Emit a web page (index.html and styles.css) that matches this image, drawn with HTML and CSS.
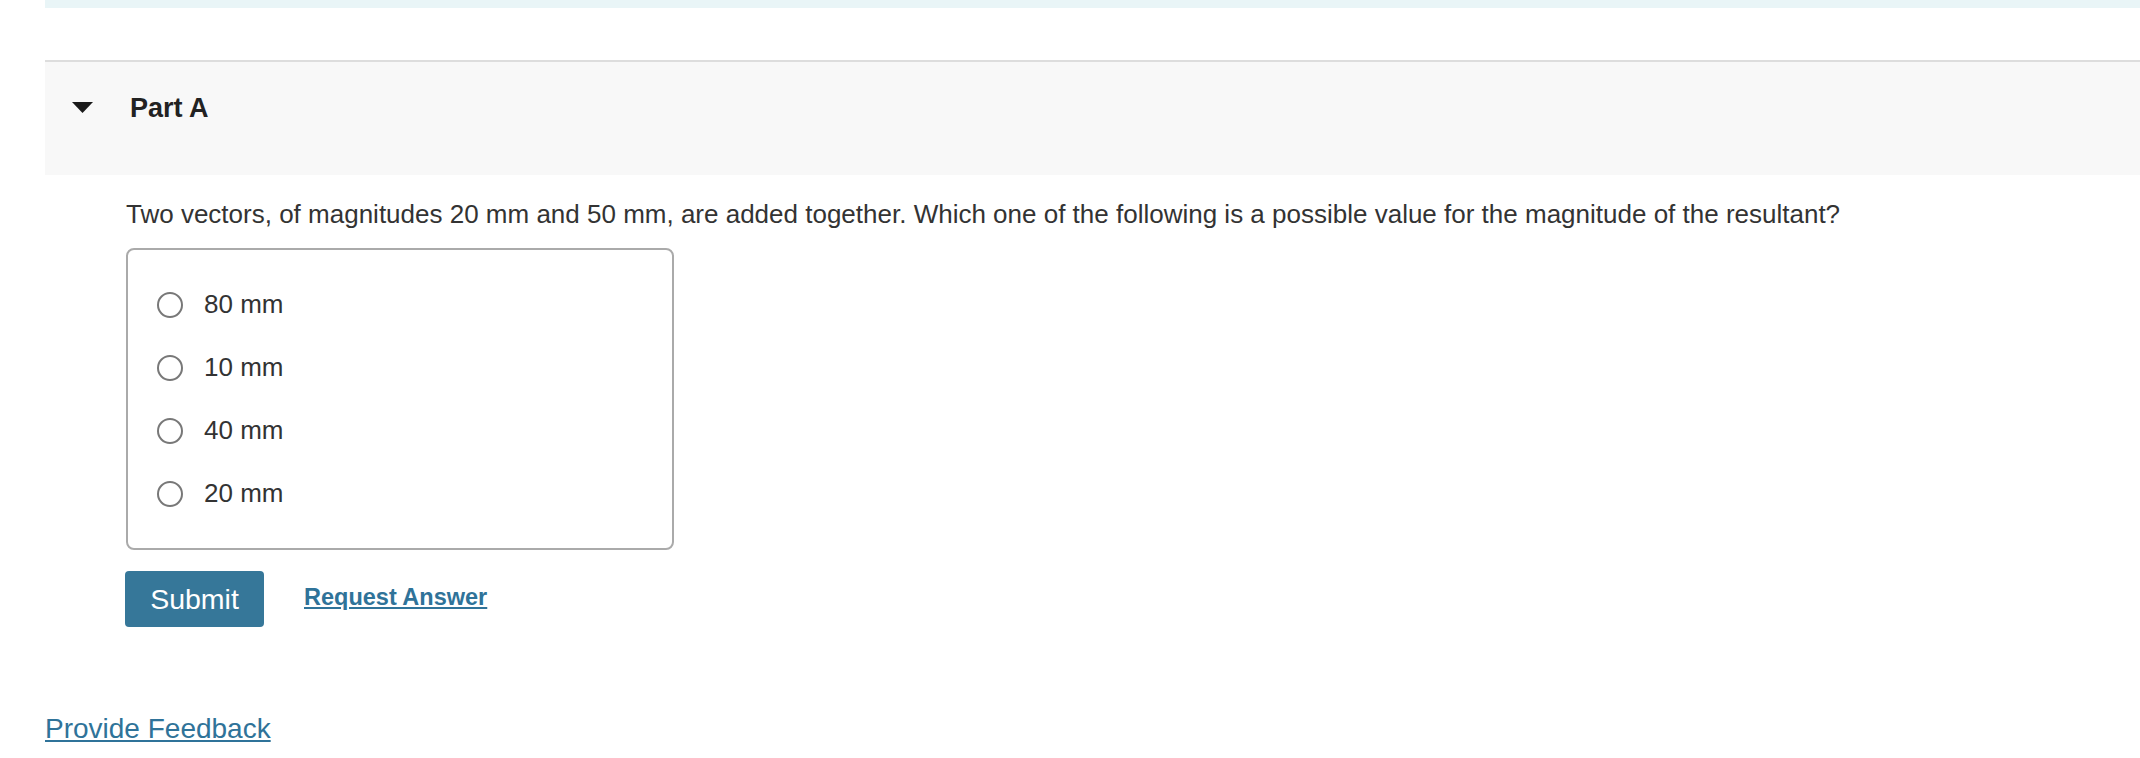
FILE: index.html
```html
<!DOCTYPE html>
<html lang="en">
<head>
<meta charset="utf-8">
<title>Part A</title>
<link rel="stylesheet" href="styles.css">
</head>
<body>
<div class="topband"></div>
<section class="part">
  <div class="part-header">
    <svg class="caret" width="21" height="11" viewBox="0 0 21 11" aria-hidden="true"><polygon points="0,0 21,0 10.5,11" fill="#1a1a1a"/></svg>
    <h2 class="part-title">Part A</h2>
  </div>
  <div class="part-body">
    <p class="question">Two vectors, of magnitudes 20 mm and 50 mm, are added together. Which one of the following is a possible value for the magnitude of the resultant?</p>
    <div class="choices">
      <label class="choice"><span class="radio"></span><span class="choice-text">80 mm</span></label>
      <label class="choice"><span class="radio"></span><span class="choice-text">10 mm</span></label>
      <label class="choice"><span class="radio"></span><span class="choice-text">40 mm</span></label>
      <label class="choice"><span class="radio"></span><span class="choice-text">20 mm</span></label>
    </div>
    <div class="actions">
      <button class="submit" type="button">Submit</button>
      <a class="request" href="#">Request Answer</a>
    </div>
  </div>
</section>
<a class="feedback" href="#">Provide Feedback</a>
</body>
</html>
```
FILE: styles.css
```css
html, body {
  margin: 0;
  padding: 0;
  background: #ffffff;
}
body {
  font-family: "Liberation Sans", Arial, Helvetica, sans-serif;
  color: #333333;
}
.topband {
  margin-left: 45px;
  height: 8px;
  background: #e9f5f7;
}
.part {
  margin-left: 45px;
  margin-top: 52px;
}
.part-header {
  border-top: 2px solid #dddddd;
  background: #f8f8f8;
  height: 83px;
  padding-top: 30px;
  padding-left: 27px;
  display: flex;
  align-items: flex-start;
  gap: 37px;
}
.caret {
  display: block;
  margin-top: 10px;
}
.part-title {
  margin: 0;
  font-size: 27px;
  font-weight: bold;
  color: #222222;
  line-height: 32px;
}
.part-body {
  padding-left: 81px;
}
.question {
  margin: 24px 0 19px 0;
  font-size: 26px;
  line-height: 30px;
  color: #333333;
}
.choices {
  width: 544px;
  border: 2px solid #aaaaaa;
  border-radius: 8px;
  padding: 23px 0 23px 0;
}
.choice {
  display: flex;
  align-items: center;
  height: 63px;
  padding-left: 29px;
  gap: 21px;
}
.radio {
  width: 22px;
  height: 22px;
  border: 2px solid #787878;
  border-radius: 50%;
  background: #ffffff;
  flex: none;
}
.choice-text {
  font-size: 26px;
  color: #333333;
}
.actions {
  margin-top: 21px;
  display: flex;
  align-items: center;
  gap: 40px;
}
.submit {
  width: 139px;
  height: 56px;
  margin-left: -1px;
  border: none;
  border-radius: 4px;
  background: #367799;
  color: #ffffff;
  font-family: "Liberation Sans", Arial, Helvetica, sans-serif;
  font-size: 28.5px;
  padding: 0;
}
.request {
  font-size: 23.5px;
  font-weight: bold;
  color: #2f7399;
  text-decoration: underline;
  margin-top: -4px;
}
.feedback {
  display: inline-block;
  margin-left: 45px;
  margin-top: 86px;
  font-size: 28px;
  line-height: 32px;
  color: #2f7399;
  text-decoration: underline;
}
```
